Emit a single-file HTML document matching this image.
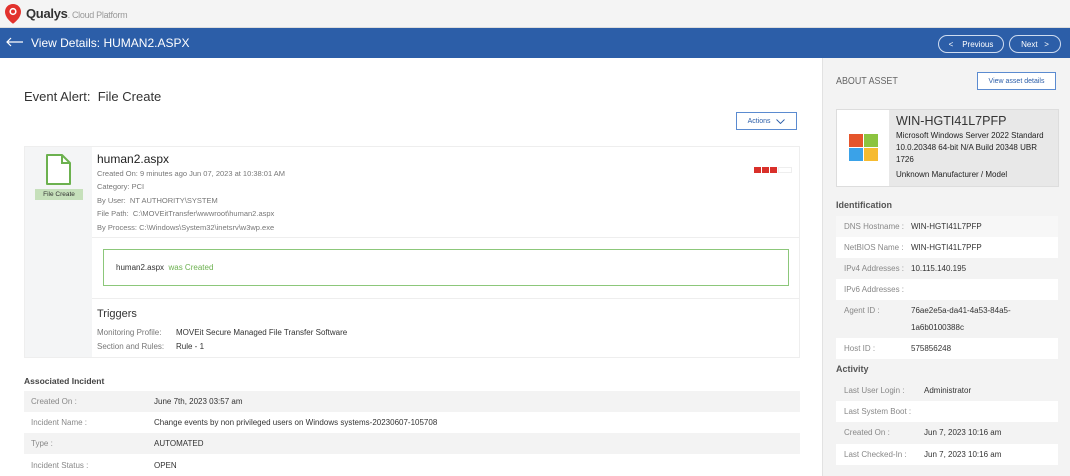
<!DOCTYPE html>
<html><head><meta charset="utf-8">
<style>
*{box-sizing:border-box;margin:0;padding:0}
body{width:1070px;height:476px;overflow:hidden;font-family:"Liberation Sans",sans-serif;background:#fff;position:relative;color:#333}
.abs{position:absolute}
.top{left:0;top:0;width:1070px;height:28px;background:#f4f4f4;border-bottom:1px solid #ddd}
.blue{left:0;top:28px;width:1070px;height:30px;background:#2c5ea8;color:#fff}
.btn{position:absolute;top:7px;height:18px;border:1px solid #cfdcf0;border-radius:10px;color:#fff;font-size:8px;display:flex;align-items:center;justify-content:center}
.ob{display:flex;align-items:center;justify-content:center}
.lbl{color:#777}
.right{left:822px;top:58px;width:248px;height:418px;background:#f3f3f3;border-left:1px solid #e2e2e2}
.row{position:absolute;left:0;width:222px;height:21px;font-size:8px;line-height:21px}
.row .k{position:absolute;left:8px;color:#888}
.row .v{position:absolute;color:#333}
.irow{position:absolute;left:24px;width:776px;height:21px;font-size:8px;line-height:21px}
.irow .k{position:absolute;left:7px;color:#888}
.irow .v{position:absolute;left:130px;color:#333}
</style></head><body>
<div class="abs top">
 <svg class="abs" style="left:5px;top:4px" width="16" height="20" viewBox="0 0 16 20"><path d="M8 0C3.5 0 0 3.4 0 7.8c0 5 4.5 9.5 8 12 3.5-2.5 8-7 8-12C16 3.4 12.5 0 8 0z" fill="#e2322d"/><circle cx="8" cy="7.5" r="3.6" fill="#fff"/><circle cx="8" cy="7.5" r="2" fill="#e2322d"/></svg>
 <div class="abs" style="left:26px;top:6px;font-size:13px;color:#333;font-weight:bold;letter-spacing:-0.3px">Qualys<span style="font-weight:normal;font-size:9px;color:#999">. Cloud Platform</span></div>
</div>
<div class="abs blue">
 <svg class="abs" style="left:6px;top:9px" width="18" height="10" viewBox="0 0 18 10"><path d="M17 5H1M5 1L1 5l4 4" fill="none" stroke="#fff" stroke-width="1.2"/></svg>
 <div class="abs" style="left:31px;top:8px;font-size:12px">View Details: HUMAN2.ASPX</div>
 <div class="btn" style="left:938px;width:66px">&lt;&nbsp;&nbsp;&nbsp; Previous</div>
 <div class="btn" style="left:1009px;width:52px">Next &nbsp;&nbsp;&gt;</div>
</div>

<div class="abs" style="left:24px;top:89px;font-size:13px;color:#333">Event Alert:&nbsp; File Create</div>
<div class="abs ob" style="left:736px;top:112px;width:61px;height:18px;border:1px solid #5b8bd0;font-size:7px;color:#2c5ea8">Actions &nbsp;&nbsp;<svg width="9" height="5" viewBox="0 0 9 5"><path d="M0.5 0.5l4 4 4-4" fill="none" stroke="#2c5ea8" stroke-width="0.9"/></svg></div>

<div class="abs" style="left:24px;top:146px;width:776px;height:212px;border:1px solid #eee">
 <div class="abs" style="left:0;top:0;width:67px;height:210px;background:#f4f5f6"></div>
 <svg class="abs" style="left:20px;top:6px" width="27" height="33" viewBox="0 0 27 33"><path d="M2 2h15l8 8v21H2z" fill="#fff" stroke="#6cb14f" stroke-width="2" stroke-linejoin="round"/><path d="M17 2v8h8" fill="none" stroke="#6cb14f" stroke-width="2"/></svg>
 <div class="abs" style="left:10px;top:42px;width:48px;height:11px;background:#c6e0bb;font-size:6.5px;line-height:11px;text-align:center;color:#333">File Create</div>
 <div class="abs" style="left:72px;top:5px;font-size:12px;color:#222">human2.aspx</div>
 <div class="abs lbl" style="left:72px;top:20px;font-size:7.5px;line-height:13.4px">Created On: 9 minutes ago Jun 07, 2023 at 10:38:01 AM<br>Category: PCI<br>By User:&nbsp; NT AUTHORITY\SYSTEM<br>File Path:&nbsp; C:\MOVEitTransfer\wwwroot\human2.aspx<br>By Process: C:\Windows\System32\inetsrv\w3wp.exe</div>
 <div class="abs" style="left:729px;top:20px;width:7px;height:6px;background:#d9302a"></div>
 <div class="abs" style="left:737px;top:20px;width:7px;height:6px;background:#d9302a"></div>
 <div class="abs" style="left:745px;top:20px;width:7px;height:6px;background:#d9302a"></div>
 <div class="abs" style="left:753px;top:20px;width:14px;height:6px;border:1px solid #eee"></div>
 <div class="abs" style="left:67px;top:90px;width:708px;height:1px;background:#eee"></div>
 <div class="abs" style="left:78px;top:102px;width:686px;height:37px;border:1px solid #8cc77a;font-size:8px;line-height:35px;padding-left:12px;color:#333">human2.aspx&nbsp; <span style="color:#6cb14f">was Created</span></div>
 <div class="abs" style="left:67px;top:151px;width:708px;height:1px;background:#eee"></div>
 <div class="abs" style="left:72px;top:161px;font-size:11px;color:#333">Triggers</div>
 <div class="abs" style="left:72px;top:179px;font-size:8px;line-height:14px"><span class="lbl">Monitoring Profile:</span><br><span class="lbl">Section and Rules:</span></div>
 <div class="abs" style="left:151px;top:179px;font-size:8px;line-height:14px">MOVEit Secure Managed File Transfer Software<br>Rule - 1</div>
</div>

<div class="abs" style="left:24px;top:376px;font-size:8.5px;font-weight:bold;color:#444">Associated Incident</div>
<div class="irow" style="top:391px;background:#f3f3f3"><span class="k">Created On :</span><span class="v">June 7th, 2023 03:57 am</span></div>
<div class="irow" style="top:412px"><span class="k">Incident Name :</span><span class="v">Change events by non privileged users on Windows systems-20230607-105708</span></div>
<div class="irow" style="top:433px;background:#f3f3f3"><span class="k">Type :</span><span class="v">AUTOMATED</span></div>
<div class="irow" style="top:455px"><span class="k">Incident Status :</span><span class="v">OPEN</span></div>

<div class="abs right">
 <div class="abs" style="left:13px;top:17px;font-size:10.5px;color:#666;transform:scaleX(.85);transform-origin:left">ABOUT ASSET</div>
 <div class="abs ob" style="left:154px;top:14px;width:79px;height:18px;background:#fff;border:1px solid #5b8bd0;font-size:7px;color:#2c5ea8">View asset details</div>
 <div class="abs" style="left:13px;top:51px;width:223px;height:78px;background:#e8e8e8;border:1px solid #ddd">
  <div class="abs" style="left:0;top:0;width:52px;height:76px;background:#fff"></div>
  <div class="abs" style="left:12px;top:24px;width:14px;height:13px;background:#e5552b"></div>
  <div class="abs" style="left:27px;top:24px;width:14px;height:13px;background:#8cc43f"></div>
  <div class="abs" style="left:12px;top:38px;width:14px;height:13px;background:#3aa2e8"></div>
  <div class="abs" style="left:27px;top:38px;width:14px;height:13px;background:#f6bb30"></div>
  <div class="abs" style="left:59px;top:4px;font-size:12.5px;color:#333">WIN-HGTI41L7PFP</div>
  <div class="abs" style="left:59px;top:20px;font-size:8px;line-height:12px;color:#222">Microsoft Windows Server 2022 Standard<br>10.0.20348 64-bit N/A Build 20348 UBR<br>1726</div>
  <div class="abs" style="left:59px;top:60px;font-size:8px;color:#222">Unknown Manufacturer / Model</div>
 </div>
 <div class="abs" style="left:13px;top:142px;font-size:9px;font-weight:bold;color:#555">Identification</div>
 <div style="position:absolute;left:13px;top:0">
  <div class="row" style="top:158px;background:#f7f7f7"><span class="k">DNS Hostname :</span><span class="v" style="left:75px">WIN-HGTI41L7PFP</span></div>
  <div class="row" style="top:179px;background:#fff"><span class="k">NetBIOS Name :</span><span class="v" style="left:75px">WIN-HGTI41L7PFP</span></div>
  <div class="row" style="top:200px"><span class="k">IPv4 Addresses :</span><span class="v" style="left:75px">10.115.140.195</span></div>
  <div class="row" style="top:221px;background:#fff"><span class="k">IPv6 Addresses :</span></div>
  <div class="row" style="top:242px;height:38px;line-height:17px;padding-top:2px"><span class="k">Agent ID :</span><span class="v" style="left:75px">76ae2e5a-da41-4a53-84a5-<br>1a6b0100388c</span></div>
  <div class="row" style="top:280px;background:#fff"><span class="k">Host ID :</span><span class="v" style="left:75px">575856248</span></div>
  <div class="abs" style="left:0;top:306px;font-size:9px;font-weight:bold;color:#555">Activity</div>
  <div class="row" style="top:322px"><span class="k">Last User Login :</span><span class="v" style="left:88px">Administrator</span></div>
  <div class="row" style="top:343px;background:#fff"><span class="k">Last System Boot :</span></div>
  <div class="row" style="top:364px"><span class="k">Created On :</span><span class="v" style="left:88px">Jun 7, 2023 10:16 am</span></div>
  <div class="row" style="top:386px;background:#fff"><span class="k">Last Checked-In :</span><span class="v" style="left:88px">Jun 7, 2023 10:16 am</span></div>
 </div>
</div>
</body></html>
